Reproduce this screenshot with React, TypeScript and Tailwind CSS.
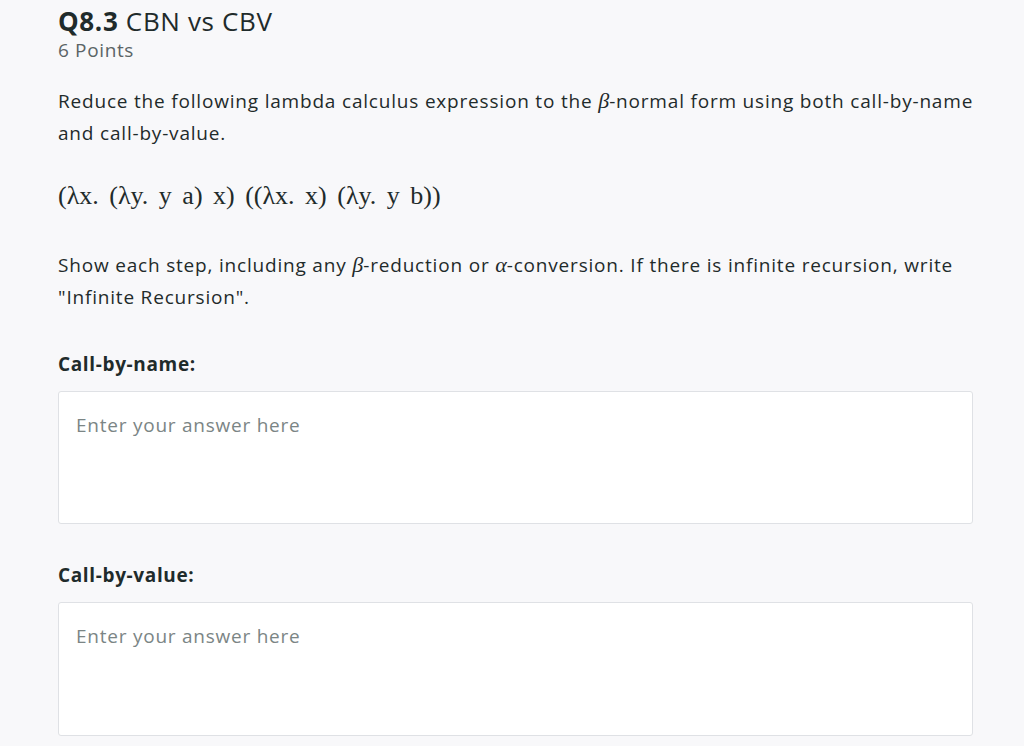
export default function App() {
  return (
    <div className="min-h-[746px] w-full bg-[#f8f8fa] text-[#1f2b2b] tracking-[0.04em] [font-family:'Open_Sans','Noto_Sans',sans-serif]">
      <div className="pl-[58px] pr-[51px] pt-[5px]">
        {/* Question header */}
        <h2 className="text-[26px] leading-[32px] tracking-[0.025em]">
          <span className="font-bold">Q8.3</span> CBN vs CBV
        </h2>
        <div className="text-[19px] leading-[26px] text-[#5b6466]">6 Points</div>

        {/* Prompt */}
        <p className="mt-[22px] text-[19px] leading-[32px] tracking-[0.0425em]">
          <span className="block whitespace-nowrap">
            Reduce the following lambda calculus expression to the{" "}
            <span className="[font-family:'Liberation_Serif',serif] italic text-[22px] tracking-normal">β</span>-normal form
            using both call-by-name
          </span>
          <span className="block whitespace-nowrap">and call-by-value.</span>
        </p>

        <p className="mt-[31px] text-[26px] leading-[32px] tracking-normal [word-spacing:4px] [font-family:'Liberation_Serif',serif]">
          (λx. (λy. y a) x) ((λx. x) (λy. y b))
        </p>

        <p className="mt-[37px] text-[19px] leading-[32px] tracking-[0.0425em]">
          <span className="block whitespace-nowrap">
            Show each step, including any{" "}
            <span className="[font-family:'Liberation_Serif',serif] italic text-[22px] tracking-normal">β</span>-reduction or{" "}
            <span className="[font-family:'Liberation_Serif',serif] italic text-[22px] tracking-normal">α</span>-conversion. If
            there is infinite recursion, write
          </span>
          <span className="block whitespace-nowrap">"Infinite Recursion".</span>
        </p>

        {/* Call-by-name */}
        <div className="mt-[35px] text-[19px] leading-[32px] font-bold">Call-by-name:</div>
        <textarea
          placeholder="Enter your answer here"
          className="mt-[11px] block h-[133px] w-full resize-none rounded-[3px] border border-[#dfe1e5] bg-white px-[17px] py-[19px] text-[19px] leading-[28px] tracking-[0.04em] text-[#1f2b2b] placeholder:text-[#7b8585] outline-none"
        />

        {/* Call-by-value */}
        <div className="mt-[35px] text-[19px] leading-[32px] font-bold">Call-by-value:</div>
        <textarea
          placeholder="Enter your answer here"
          className="mt-[11px] block h-[134px] w-full resize-none rounded-[3px] border border-[#dfe1e5] bg-white px-[17px] py-[19px] text-[19px] leading-[28px] tracking-[0.04em] text-[#1f2b2b] placeholder:text-[#7b8585] outline-none"
        />
      </div>
    </div>
  );
}
